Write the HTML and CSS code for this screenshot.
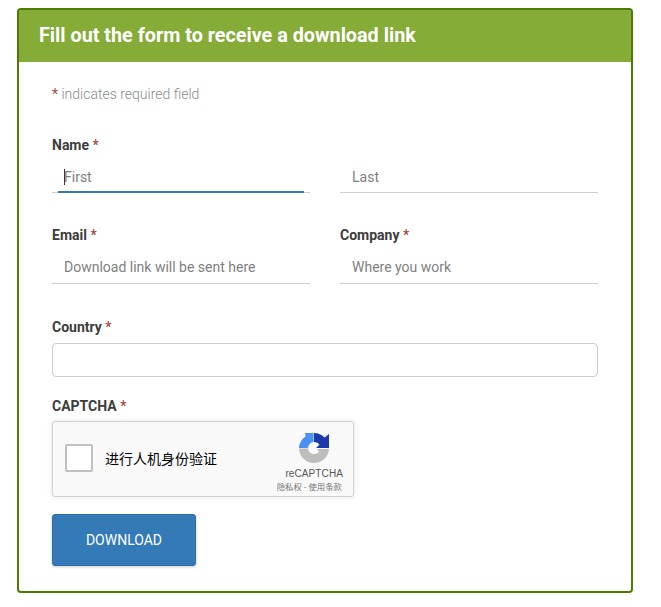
FILE: index.html
```html
<!DOCTYPE html>
<html lang="en">
<head>
<meta charset="UTF-8" />
<meta name="viewport" content="width=device-width, initial-scale=1" />
<title>Download</title>
<link rel="stylesheet" href="styles.css">
</head>
<body>

<div class="panel">
  <div class="panel-heading">Fill out the form to receive a download link</div>
  <form class="panel-body">
    <p class="note"><span class="req">*</span> indicates required field</p>

    <div class="label name-label">Name <span class="req">*</span></div>
    <div class="row">
      <div class="field focused">
        <input type="text" placeholder="First">
        <span class="caret"></span>
      </div>
      <div class="field"><input type="text" placeholder="Last"></div>
    </div>

    <div class="row row-labeled">
      <div>
        <div class="label">Email <span class="req">*</span></div>
        <div class="field"><input type="text" placeholder="Download link will be sent here"></div>
      </div>
      <div>
        <div class="label">Company <span class="req">*</span></div>
        <div class="field"><input type="text" placeholder="Where you work"></div>
      </div>
    </div>

    <div class="label country-label">Country <span class="req">*</span></div>
    <div class="select-box"></div>

    <div class="label captcha-label">CAPTCHA <span class="req">*</span></div>
    <div class="captcha">
      <div class="captcha-check"></div>
      <div class="captcha-text">进行人机身份验证</div>
      <div class="captcha-brand">
        <svg class="captcha-logo" viewBox="0 0 30 30" width="30" height="30">
          <path d="M14.500 0 H6 L6.500 3.500 A15 15 0 0 0 0 15 H9 A6 6 0 0 1 14.500 9 Z" fill="#4a90f5"/>
          <path d="M15 0 A15 15 0 0 1 25.500 4.500 L30 1 V15 H17 L20.500 11.500 A6 6 0 0 0 15 9 Z" fill="#1c3aa9"/>
          <path d="M0 15.500 H9 A6 6 0 0 0 15 21 C17 21 19 20.500 20 19 L18 16 H30 A15 15 0 0 1 15 30 A15 15 0 0 1 0 15.500 Z" fill="#bdbdbd"/>
        </svg>
        <div class="captcha-name">reCAPTCHA</div>
        <div class="captcha-links">隐私权 - 使用条款</div>
      </div>
    </div>

    <button type="button" class="btn-download">DOWNLOAD</button>
  </form>
</div>

</body>
</html>
```

FILE: styles.css
```css
* {
  box-sizing: border-box;
}
html, body {
  margin: 0;
  padding: 0;
  background: #fff;
}
body {
  padding: 8px 28px 0 17px;
  color: #333;
  font-family: Roboto, 'Liberation Sans', sans-serif;
  font-size: 14px;
}
.panel {
  width: 616px;
  height: 585px;
  border: 2px solid #4f7c00;
  border-radius: 4px;
}
.panel-heading {
  height: 52px;
  padding: 0 20px;
  background: #84ac37;
  color: #fff;
  font-size: 19.800px;
  font-weight: 700;
  line-height: 52px;
}
.panel-body {
  padding: 24px 33px 0;
}
.note {
  margin: 0;
  color: #8a8a8a;
  font-size: 14px;
  font-weight: 300;
  line-height: 16px;
}
.req {
  color: #9c4a4a;
  font-weight: 400;
}
.label {
  color: #3c3c3c;
  font-size: 14px;
  font-weight: 700;
  line-height: 16px;
}
.label .req {
  color: #a94442;
  font-weight: 500;
}
.name-label {
  margin-top: 35px;
}
.row {
  display: grid;
  grid-template-columns: 258px 258px;
  gap: 30px;
}
.row-labeled {
  margin-top: 34px;
}
.field {
  position: relative;
  height: 31px;
  margin-top: 9px;
  border-bottom: 1px solid #cfcfcf;
}
.row-labeled .field {
  height: 34px;
  margin-top: 7px;
}
.field input {
  display: block;
  width: 100%;
  height: 100%;
  padding: 0 12px;
  border: 0;
  outline: 0;
  background: transparent;
  color: #333;
  font-family: inherit;
  font-size: 14px;
}
.field input::placeholder {
  color: #7f7f7f;
  opacity: 1;
}
.field.focused::after {
  content: "";
  position: absolute;
  left: 6px;
  right: 6px;
  bottom: -1px;
  height: 2px;
  background: #337ab7;
}
.caret {
  position: absolute;
  left: 12px;
  top: 7px;
  width: 1px;
  height: 16px;
  background: #333;
}
.country-label {
  margin-top: 35px;
}
.select-box {
  height: 34px;
  margin-top: 8px;
  border: 1px solid #ccc;
  border-radius: 4px;
}
.captcha-label {
  margin-top: 21px;
}
.captcha {
  display: flex;
  align-items: center;
  width: 302px;
  height: 76px;
  margin-top: 7px;
  padding: 0 12px;
  border: 1px solid #d3d3d3;
  border-radius: 3px;
  background: #f9f9f9;
  box-shadow: 0 0 4px 1px rgba(0,0,0,0.08);
}
.captcha-check {
  flex: none;
  width: 28px;
  height: 28px;
  margin-bottom: 2px;
  border: 2px solid #c1c1c1;
  border-radius: 2px;
  background: #fff;
}
.captcha-text {
  margin-left: 12px;
  margin-bottom: 2px;
  color: #000;
  font-family: 'Noto Sans CJK SC', sans-serif;
  font-size: 14px;
}
.captcha-brand {
  display: flex;
  flex-direction: column;
  align-items: flex-end;
  align-self: flex-start;
  margin-top: 11px;
  margin-left: auto;
  margin-right: -2px;
}
.captcha-logo {
  display: block;
  margin-right: 14px;
}
.captcha-name {
  margin-top: 5px;
  color: #555;
  font-family: 'Liberation Sans', Arial, sans-serif;
  font-size: 10px;
  letter-spacing: 0.1px;
  line-height: 12px;
  white-space: nowrap;
}
.captcha-links {
  margin-right: 1px;
  color: #777;
  font-family: 'Noto Sans CJK SC', sans-serif;
  font-size: 8.400px;
  line-height: 12px;
  white-space: nowrap;
}
.btn-download {
  display: block;
  width: 144px;
  height: 52px;
  margin-top: 17px;
  border: 1px solid #2e6da4;
  border-radius: 3px;
  background: #337ab7;
  color: #fff;
  font-family: inherit;
  font-size: 14px;
  font-weight: 400;
  box-shadow: 0 1px 3px rgba(0,0,0,0.2);
}
```
